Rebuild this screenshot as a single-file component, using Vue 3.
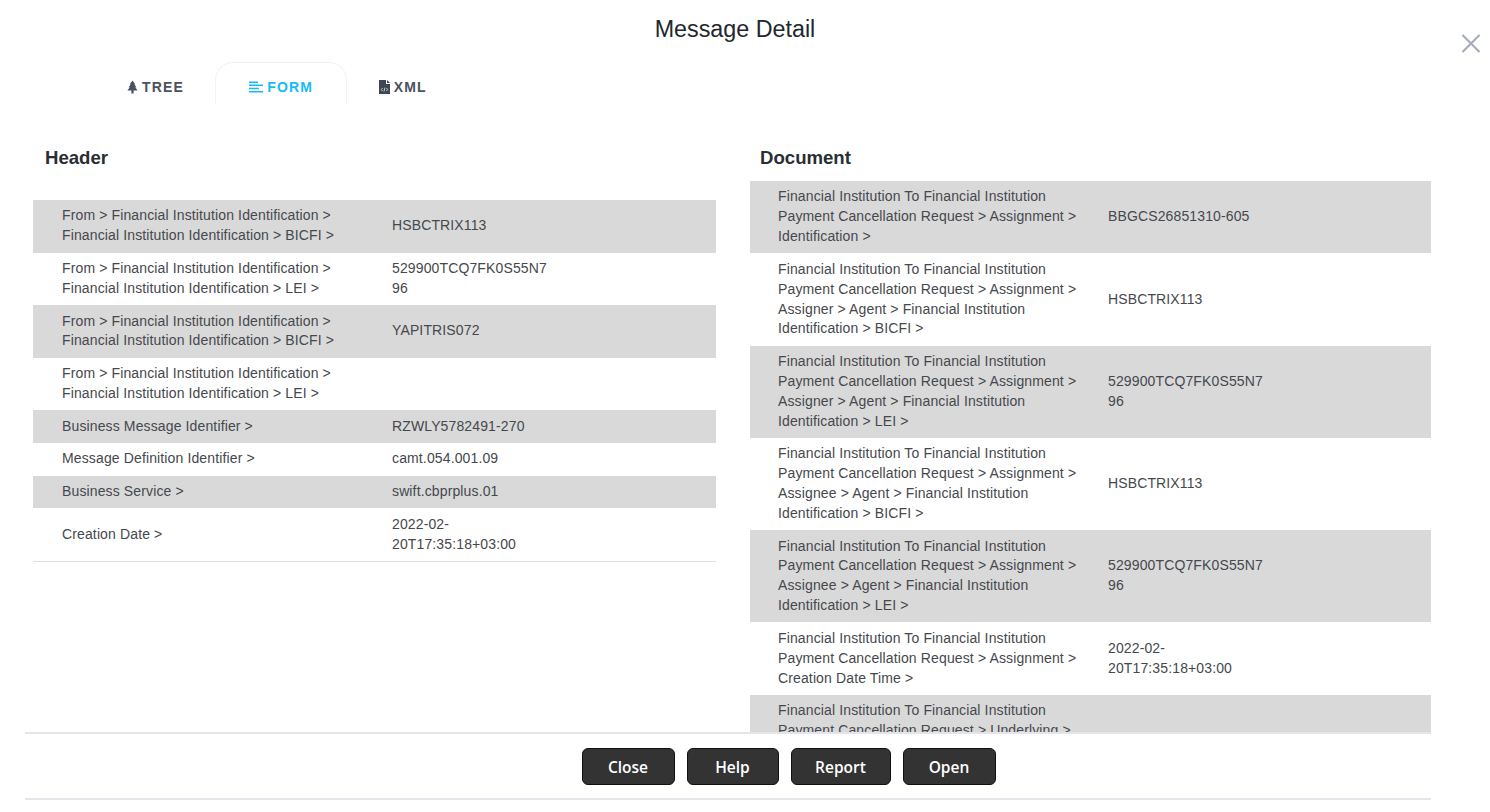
<script setup>
const fi = 'From > Financial Institution Identification > Financial Institution Identification > '
const p = 'Financial Institution To Financial Institution Payment Cancellation Request > '
const header = [
  [fi + 'BICFI >', 'HSBCTRIX113'],
  [fi + 'LEI >', '529900TCQ7FK0S55N796'],
  [fi + 'BICFI >', 'YAPITRIS072'],
  [fi + 'LEI >', ''],
  ['Business Message Identifier >', 'RZWLY5782491-270'],
  ['Message Definition Identifier >', 'camt.054.001.09'],
  ['Business Service >', 'swift.cbprplus.01'],
  ['Creation Date >', '2022-02-20T17:35:18+03:00'],
]
const doc = [
  [p + 'Assignment > Identification >', 'BBGCS26851310-605'],
  [p + 'Assignment > Assigner > Agent > Financial Institution Identification > BICFI >', 'HSBCTRIX113'],
  [p + 'Assignment > Assigner > Agent > Financial Institution Identification > LEI >', '529900TCQ7FK0S55N796'],
  [p + 'Assignment > Assignee > Agent > Financial Institution Identification > BICFI >', 'HSBCTRIX113'],
  [p + 'Assignment > Assignee > Agent > Financial Institution Identification > LEI >', '529900TCQ7FK0S55N796'],
  [p + 'Assignment > Creation Date Time >', '2022-02-20T17:35:18+03:00'],
  [p + 'Underlying > Transaction Information >', ''],
]
const buttons = [
  { text: 'Close', size: 'base' },
  { text: 'Help', size: 'narrow' },
  { text: 'Report', size: 'wide' },
  { text: 'Open', size: 'base' },
]
</script>

<template>
  <div class="dialog">
    <h1 class="title">Message Detail</h1>
    <svg class="x-icon" viewBox="0 0 20 20" width="20" height="20" aria-label="Close">
      <path d="M1.5 2 L18.5 19 M18.5 2 L1.5 19" stroke="#a4a8b8" stroke-width="2" fill="none" />
    </svg>

    <nav class="tabs">
      <div class="tab">
        <svg viewBox="0 0 12 14" width="11" height="14"><path d="M6 0 L9 4 H8 L10.2 7.2 H9 L11.5 10.8 H7.2 V14 H4.8 V10.8 H.5 L3 7.2 H1.8 L4 4 H3 Z" fill="#4a5260" /></svg>
        <span>TREE</span>
      </div>
      <div class="tab active">
        <svg viewBox="0 0 14 12" width="14" height="12"><path d="M0 .5 H9 V2 H0 Z M0 3.5 H14 V5 H0 Z M0 6.8 H10 V8.3 H0 Z M0 10 H14 V11.5 H0 Z" fill="#14bcf8" /></svg>
        <span>FORM</span>
      </div>
      <div class="tab">
        <svg viewBox="0 0 11 14" width="11" height="14"><path d="M0 0 H7 V4 H11 V14 H0 Z M8 0 L11 3 H8 Z" fill="#3f4754" /><path d="M3.6 8 L2.3 9.5 L3.6 11 M7.4 8 L8.7 9.5 L7.4 11 M6 7.6 L5 11.4" stroke="#fff" stroke-width=".7" fill="none" /></svg>
        <span>XML</span>
      </div>
    </nav>

    <main class="columns">
      <section class="col left">
        <h2>Header</h2>
        <div class="table">
          <div v-for="(r, i) in header" :key="i" class="row">
            <div class="label">{{ r[0] }}</div>
            <div class="value">{{ r[1] }}</div>
          </div>
        </div>
      </section>
      <section class="col right">
        <h2>Document</h2>
        <div class="table">
          <div v-for="(r, i) in doc" :key="i" class="row">
            <div class="label">{{ r[0] }}</div>
            <div class="value">{{ r[1] }}</div>
          </div>
        </div>
      </section>
    </main>

    <footer class="footer">
      <button v-for="b in buttons" :key="b.text" class="btn" :class="b.size">{{ b.text }}</button>
    </footer>
  </div>
</template>

<style>
html, body { margin: 0; background: #fff; overflow: hidden; }
</style>

<style scoped>
.dialog {
  position: relative;
  width: 1490px;
  height: 812px;
  overflow: hidden;
  background: #fff;
  font-family: "Liberation Sans", Arial, sans-serif;
  color: #3a3f47;
  box-sizing: border-box;
  padding: 14px 59px 0 25px;
  display: flex;
  flex-direction: column;
}
.title {
  margin: 0;
  height: 30px;
  line-height: 30px;
  text-align: center;
  font-size: 23.3px;
  font-weight: 400;
  color: #23272d;
  padding-left: 14px;
}
.x-icon { position: absolute; left: 1461px; top: 33px; }
.tabs {
  display: flex;
  margin-top: 18px;
  padding-left: 70px;
  height: 42px;
  flex: none;
}
.tab {
  height: 42px;
  box-sizing: border-box;
  display: flex;
  align-items: center;
  justify-content: center;
  gap: 4px;
  font-size: 14px;
  font-weight: 700;
  letter-spacing: 1.2px;
  color: #4a5260;
  padding: 6px 30px 0 31px;
  border: 1px solid transparent;
  border-bottom: 0;
}
.tab.active {
  color: #14bcf8;
  padding: 6px 32.5px 0 33px;
  border-color: #f3f3f5;
  border-radius: 18px 18px 0 0;
}
.columns {
  flex: none;
  height: 630px;
  display: flex;
  overflow: hidden;
  border-bottom: 2px solid #e4e5ea;
  box-sizing: border-box;
}
.col { flex: none; }
.left { width: 691px; padding: 42px 0 0 8px; box-sizing: border-box; }
.right { width: 681px; margin-left: 34px; padding-top: 42px; }
h2 {
  margin: 0;
  font-size: 18.6px;
  line-height: 24px;
  font-weight: 700;
  color: #2a2e33;
  padding-left: 12px;
}
.right h2 { padding-left: 10px; }
.table { border-bottom: 1px solid #dfe0e2; }
.left .table { margin-top: 30px; }
.right .table { margin-top: 11px; }
.row {
  display: flex;
  align-items: center;
  padding: 6.45px 0;
  font-size: 14px;
  line-height: 19.85px;
  letter-spacing: .13px;
  color: #45484d;
}
.row:nth-child(odd) { background: #d9d9d9; }
.label { width: 302px; margin-left: 28px; margin-right: 28px; flex: none; }
.left .label { margin-left: 29px; }
.value { width: 160px; overflow-wrap: anywhere; }
.footer {
  flex: none;
  height: 66px;
  box-sizing: border-box;
  display: flex;
  justify-content: center;
  align-items: center;
  gap: 12px;
  border-bottom: 2px solid #e4e5ea;
  padding-left: 121px;
}
.btn {
  height: 37px;
  margin-top: 1px;
  box-sizing: border-box;
  background: #333;
  color: #fff;
  border: 1px solid #111;
  border-radius: 6px;
  font-family: "Open Sans", "Noto Sans", sans-serif;
  font-size: 15.5px;
  font-weight: 600;
  padding: 0;
  width: 93px;
}
.btn.narrow { width: 92px; }
.btn.wide { width: 100px; }
</style>
